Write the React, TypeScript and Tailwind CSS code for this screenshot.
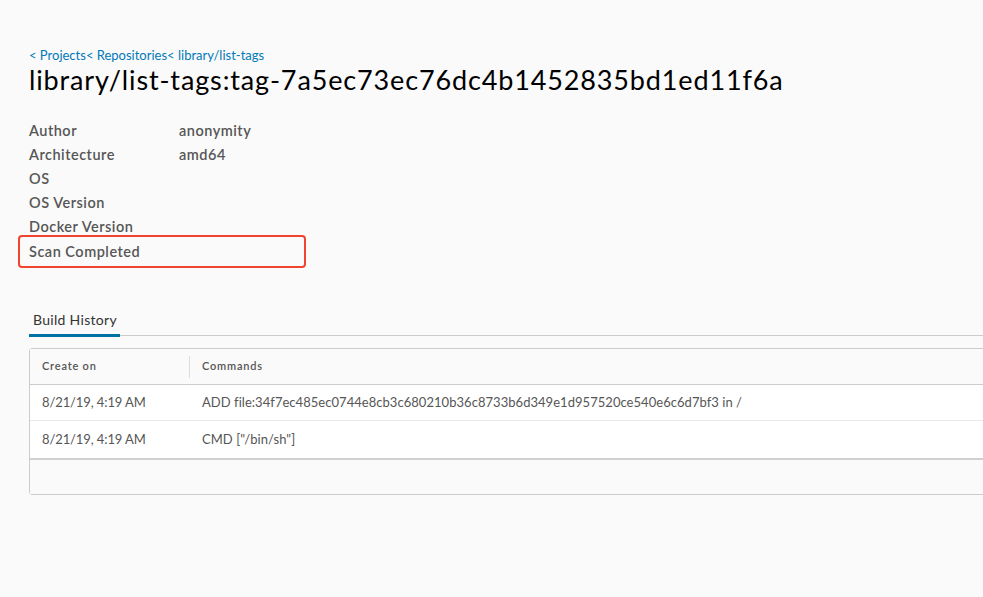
import React from "react";

const rows = [
  { label: "Author", value: "anonymity" },
  { label: "Architecture", value: "amd64" },
  { label: "OS", value: "" },
  { label: "OS Version", value: "" },
  { label: "Docker Version", value: "" },
];

export default function App() {
  return (
    <div
      className="w-[983px] h-[597px] overflow-hidden bg-[#fafafa] text-[#565656]"
      style={{ fontFamily: "Lato, 'Open Sans', sans-serif" }}
    >
      <div className="pl-[29px] pt-[47px]">
        <div className="text-[13px] leading-[16px] text-[#0079b8]">
          <span>&lt; Projects</span>
          <span>&lt; Repositories</span>
          <span>&lt; library/list-tags</span>
        </div>
        <h1 className="text-[27px] leading-[32px] text-black font-normal mt-[1px] tracking-[0.86px] whitespace-nowrap">
          library/list-tags:tag-7a5ec73ec76dc4b1452835bd1ed11f6a
        </h1>
        <div className="mt-[23px] flex flex-col">
          {rows.map((r) => (
            <div key={r.label} className="flex h-[24px] items-center text-[14.5px] font-semibold tracking-[0.5px]">
              <div className="w-[150px]">{r.label}</div>
              <div>{r.value}</div>
            </div>
          ))}
          <div className="-ml-[11px] w-[288px] h-[33px] border-2 border-[#f0442e] rounded-[4px] flex items-center pl-[9px] text-[14.5px] font-semibold tracking-[0.5px] -mt-[4px]">
            Scan Completed
          </div>
        </div>
        <div className="mt-[41px] border-b border-[#cccccc] flex">
          <div className="px-[4px] pb-[4px] border-b-[3px] border-[#0072a3] -mb-[2px] text-[14px] tracking-[0.3px] text-[#333] w-[91px] whitespace-nowrap">
            Build History
          </div>
        </div>
        <div className="mt-[12px] w-[1000px] border border-[#cccccc] rounded-l-[3px] bg-white text-[13px] tracking-[0.04px]">
          <div className="flex h-[36px] items-center bg-[#fafafa] border-b border-[#cccccc] text-[11px] font-semibold tracking-[0.8px]">
            <div className="w-[160px] pl-[12px] h-[22px] flex items-center border-r border-[#dddddd]">Create on</div>
            <div className="pl-[12px]">Commands</div>
          </div>
          {[
            ["8/21/19, 4:19 AM", "ADD file:34f7ec485ec0744e8cb3c680210b36c8733b6d349e1d957520ce540e6c6d7bf3 in /"],
            ["8/21/19, 4:19 AM", 'CMD ["/bin/sh"]'],
          ].map((r, i) => (
            <div
              key={i}
              className={`flex items-center whitespace-nowrap ${i === 0 ? "h-[36px] border-b border-[#e8e8e8]" : "h-[37px]"}`}
            >
              <div className="w-[160px] pl-[12px] tracking-[-0.1px]">{r[0]}</div>
              <div className="pl-[12px]">{r[1]}</div>
            </div>
          ))}
          <div className="h-[36px] bg-[#fafafa] border-t-2 border-[#d0d0d0]"></div>
        </div>
      </div>
    </div>
  );
}
